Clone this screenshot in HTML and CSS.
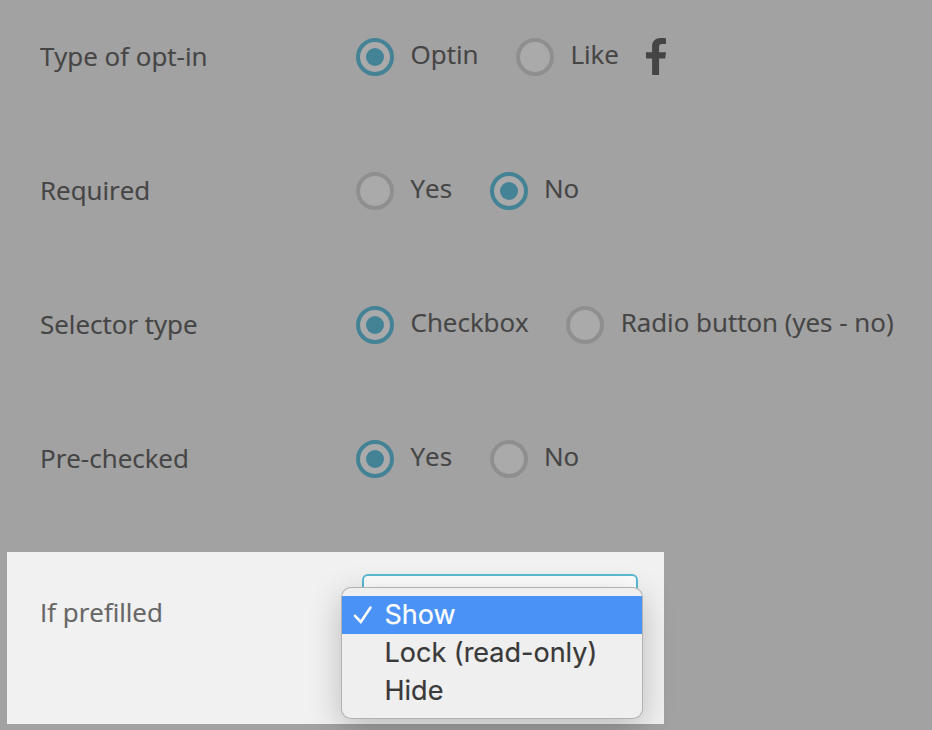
FILE: index.html
```html
<!DOCTYPE html>
<html lang="en">
<head>
<meta charset="utf-8">
<title>Opt-in settings</title>
<link rel="stylesheet" href="styles.css">
</head>
<body>
<main class="settings">
  <div class="row">
    <div class="label">Type of opt-in</div>
    <div class="options">
      <div class="option"><span class="radio checked"></span><span class="text">Optin</span></div>
      <div class="option"><span class="radio"></span><span class="text">Like</span>
        <svg class="fb" viewBox="0 0 20 37" width="20" height="37"><path d="M20 .2V6h-3.600c-2.500 0-3.300 1-3.300 3v5.200H20l-.8 6.300h-6.100V37H6.100V20.500H0v-6.300h6.100V8.500C6.100 3 9.500 0 14.800 0c2.200 0 4.200.1 5.200.2z"/></svg>
      </div>
    </div>
  </div>
  <div class="row">
    <div class="label">Required</div>
    <div class="options">
      <div class="option"><span class="radio"></span><span class="text">Yes</span></div>
      <div class="option"><span class="radio checked"></span><span class="text">No</span></div>
    </div>
  </div>
  <div class="row">
    <div class="label">Selector type</div>
    <div class="options">
      <div class="option"><span class="radio checked"></span><span class="text">Checkbox</span></div>
      <div class="option"><span class="radio"></span><span class="text">Radio button (yes - no)</span></div>
    </div>
  </div>
  <div class="row">
    <div class="label">Pre-checked</div>
    <div class="options">
      <div class="option"><span class="radio checked"></span><span class="text">Yes</span></div>
      <div class="option"><span class="radio"></span><span class="text">No</span></div>
    </div>
  </div>
  <section class="highlight">
    <div class="label">If prefilled</div>
    <div class="select">
      <div class="menu">
        <div class="item selected"><svg class="check" viewBox="0 0 20 20" width="20" height="20"><path d="M2 10.800 7.800 17 17.500 2.500"/></svg>Show</div>
        <div class="item">Lock (read-only)</div>
        <div class="item">Hide</div>
      </div>
    </div>
  </section>
</main>
</body>
</html>
```
FILE: styles.css
```css
* { box-sizing: border-box; }
body {
  margin: 0;
  width: 932px;
  height: 730px;
  overflow: hidden;
  background: #a2a2a2;
  color: #454545;
  font: 26px/36px "Open Sans", sans-serif;
  -webkit-text-stroke: 0.2px;
}
.row {
  display: flex;
  height: 134px;
  padding: 38px 0 0 40px;
}
.label { width: 316px; white-space: nowrap; }
.options { display: flex; gap: 37.500px; height: 38px; }
.option { display: flex; align-items: center; white-space: nowrap; }
.radio {
  width: 38px;
  height: 38px;
  margin-right: 16.500px;
  border: 4px solid #8f8f8f;
  border-radius: 50%;
  background: #aaaaaa;
  display: grid;
  place-items: center;
}
.radio.checked { border-color: #448396; }
.radio.checked::after {
  content: "";
  width: 18px;
  height: 18px;
  border-radius: 50%;
  background: #448396;
}
.text { margin-top: -6px; }
.fb { margin: -2px 0 0 27.500px; fill: #454545; }
.highlight {
  display: flex;
  width: 657px;
  height: 172px;
  margin: 16px 0 0 7px;
  padding: 22px 0 0 33px;
  background: #f1f1f1;
}
.highlight .label { width: 322px; padding-top: 20px; color: #666; }
.select {
  position: relative;
  width: 276px;
  height: 60px;
  border: 2px solid #5bb9d2;
  border-radius: 6px;
  background: #fdfdfd;
}
.menu {
  position: absolute;
  left: -22px;
  top: 12px;
  width: 300px;
  height: 130px;
  padding-top: 8px;
  border-radius: 9px;
  background: #efefef;
  box-shadow: 0 0 0 1px #b2b2b2, 0 10px 34px rgba(0,0,0,.24);
}
.item {
  position: relative;
  height: 38px;
  padding-left: 42.500px;
  color: #393939;
  font: 27px/37px Inter, sans-serif;
}
.item.selected { background: #4a92f5; color: #fff; }
.check {
  position: absolute;
  left: 11px;
  top: 9px;
  fill: none;
  stroke: #fff;
  stroke-width: 2.6;
  stroke-linecap: round;
}
```
